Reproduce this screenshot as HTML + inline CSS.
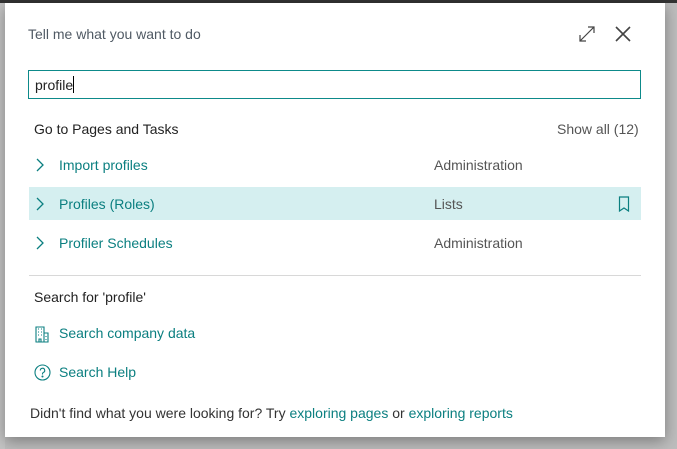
<!DOCTYPE html>
<html><head><meta charset="utf-8"><style>
*{margin:0;padding:0;box-sizing:border-box}
body{width:677px;height:449px;overflow:hidden;background:#bdbdbd;font-family:"Liberation Sans",sans-serif;position:relative}
.top{position:absolute;left:0;top:0;width:677px;height:3px;background:#333}
.bgl{position:absolute;left:0;top:3px;width:5px;height:446px;background:#c4c4c4}
.dlg{position:absolute;left:5px;top:3px;width:660px;height:434px;background:#fff;box-shadow:0 4px 14px rgba(0,0,0,.35)}
.t{position:absolute;white-space:nowrap}
.teal{color:#0b7f80}
.row{position:absolute;left:24px;width:612px;height:33px}
</style></head><body>
<div class="top"></div><div class="bgl"></div>
<div class="dlg">
<div class="t" style="left:23px;top:23px;font-size:14px;color:#505a64">Tell me what you want to do</div>
<svg style="position:absolute;left:572px;top:21px" width="20" height="20" viewBox="0 0 20 20" fill="none" stroke="#444" stroke-width="1.2"><path d="M3 17L17 3M11 3h6v6M3 11v6h6"/></svg>
<svg style="position:absolute;left:608px;top:21px" width="20" height="20" viewBox="0 0 20 20" fill="none" stroke="#444" stroke-width="1.6"><path d="M3 3L17 17M17 3L3 17"/></svg>
<div style="position:absolute;left:23px;top:67px;width:613px;height:29px;border:1px solid #0d8a8a"></div>
<div class="t" style="left:30px;top:73px;font-size:14px;color:#222">profile<span style="display:inline-block;width:1px;height:17px;background:#000;vertical-align:-3px"></span></div>
<div class="t" style="left:29px;top:118px;font-size:14px;color:#222">Go to Pages and Tasks</div>
<div class="t" style="left:552px;top:118px;font-size:14px;color:#555">Show all (12)</div>
<div class="row" style="top:146px"></div>
<div class="row" style="top:184px;background:#d5eff0"></div>
<svg style="position:absolute;left:30px;top:154px" width="10" height="16" viewBox="0 0 10 16" fill="none" stroke="#0b7f80" stroke-width="1.3"><path d="M2 2l6 6-6 6"/></svg>
<svg style="position:absolute;left:30px;top:193px" width="10" height="16" viewBox="0 0 10 16" fill="none" stroke="#0b7f80" stroke-width="1.3"><path d="M2 2l6 6-6 6"/></svg>
<svg style="position:absolute;left:30px;top:232px" width="10" height="16" viewBox="0 0 10 16" fill="none" stroke="#0b7f80" stroke-width="1.3"><path d="M2 2l6 6-6 6"/></svg>
<div class="t teal" style="left:54px;top:154px;font-size:14px">Import profiles</div>
<div class="t teal" style="left:54px;top:193px;font-size:14px">Profiles (Roles)</div>
<div class="t teal" style="left:54px;top:232px;font-size:14px">Profiler Schedules</div>
<div class="t" style="left:429px;top:154px;font-size:14px;color:#555">Administration</div>
<div class="t" style="left:429px;top:193px;font-size:14px;color:#555">Lists</div>
<div class="t" style="left:429px;top:232px;font-size:14px;color:#555">Administration</div>
<svg style="position:absolute;left:613px;top:193px" width="12" height="16" viewBox="0 0 12 16" fill="none" stroke="#0b7f80" stroke-width="1.2"><path d="M1.5 1h9v14l-4.5-3-4.5 3z"/></svg>
<div style="position:absolute;left:24px;top:272px;width:612px;height:1px;background:#d8d8d8"></div>
<div class="t" style="left:29px;top:286px;font-size:14px;color:#222">Search for 'profile'</div>
<svg style="position:absolute;left:30px;top:322px" width="14" height="18" viewBox="0 0 14 18" fill="none" stroke="#0b7f80" stroke-width="1.1"><path d="M1 17V2h8v15M9 8h4v9H0.5M4 17v-3h2v3M3 4h1M6 4h1M3 7h1M6 7h1M3 10h1M6 10h1M11 11v1M11 14v1"/></svg>
<div class="t teal" style="left:54px;top:322px;font-size:14px">Search company data</div>
<svg style="position:absolute;left:29px;top:361px" width="17" height="17" viewBox="0 0 17 17" fill="none" stroke="#0b7f80" stroke-width="1.1"><circle cx="8.5" cy="8.5" r="7.5"/><path d="M6.3 6.5a2.2 2.2 0 1 1 3 2c-.6.3-.8.7-.8 1.3v.7"/><circle cx="8.5" cy="12.5" r=".5" fill="#0b7f80"/></svg>
<div class="t teal" style="left:54px;top:361px;font-size:14px">Search Help</div>
<div class="t" style="left:25px;top:402px;font-size:14px;color:#333">Didn't find what you were looking for? Try <span class="teal">exploring pages</span> or <span class="teal">exploring reports</span></div>
</div>
</body></html>
